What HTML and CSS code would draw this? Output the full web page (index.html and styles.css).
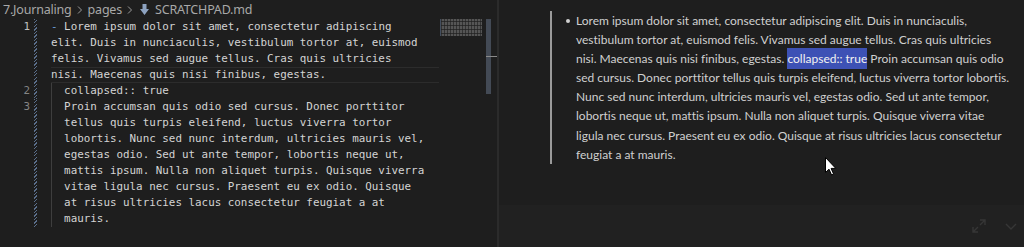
FILE: index.html
```html
<!DOCTYPE html>
<html lang="en">
<head>
<meta charset="utf-8">
<title>SCRATCHPAD.md</title>
<link rel="stylesheet" href="styles.css">
</head>
<body>
<div class="window">
  <section class="pane-left">
    <nav class="breadcrumb">
      <span class="crumb">7.Journaling</span>
      <svg class="chev" width="8" height="10" viewBox="0 0 8 10"><polyline points="2,1.5 5.5,5 2,8.5" fill="none" stroke="#9a9a9a" stroke-width="1"/></svg>
      <span class="crumb">pages</span>
      <svg class="chev" width="8" height="10" viewBox="0 0 8 10"><polyline points="2,1.5 5.5,5 2,8.5" fill="none" stroke="#9a9a9a" stroke-width="1"/></svg>
      <svg class="md-icon" width="9" height="11" viewBox="0 0 9 11"><path d="M2.5 0h4v5h2.5l-4.5 6-4.5-6h2.5z" fill="#8da2c0"/></svg>
      <span class="crumb">SCRATCHPAD.md</span>
    </nav>
    <div class="editor">
      <div class="code">
        <div class="line current">
          <div class="ln">1</div>
          <div class="text">
            <div class="row"><span class="dash">-</span> Lorem ipsum dolor sit amet, consectetur adipiscing</div>
            <div class="row">elit. Duis in nunciaculis, vestibulum tortor at, euismod</div>
            <div class="row">felis. Vivamus sed augue tellus. Cras quis ultricies</div>
            <div class="row row-active">nisi. Maecenas quis nisi finibus, egestas.</div>
          </div>
        </div>
        <div class="line">
          <div class="ln">2</div>
          <div class="text guide">
            <div class="row">  collapsed:: true</div>
          </div>
        </div>
        <div class="line">
          <div class="ln">3</div>
          <div class="text guide">
            <div class="row">  Proin accumsan quis odio sed cursus. Donec porttitor</div>
            <div class="row">  tellus quis turpis eleifend, luctus viverra tortor</div>
            <div class="row">  lobortis. Nunc sed nunc interdum, ultricies mauris vel,</div>
            <div class="row">  egestas odio. Sed ut ante tempor, lobortis neque ut,</div>
            <div class="row">  mattis ipsum. Nulla non aliquet turpis. Quisque viverra</div>
            <div class="row">  vitae ligula nec cursus. Praesent eu ex odio. Quisque</div>
            <div class="row">  at risus ultricies lacus consectetur feugiat a at</div>
            <div class="row">  mauris.</div>
          </div>
        </div>
      </div>
      <div class="minimap"><div class="mini-text"></div></div>
      <div class="scrollbar">
        <div class="slider"></div>
        <div class="marker"></div>
      </div>
    </div>
  </section>
  <div class="divider"></div>
  <section class="pane-right">
    <div class="preview">
      <ul class="bullets">
        <li>
          <span class="pl">Lorem ipsum dolor sit amet, consectetur adipiscing elit. Duis in nunciaculis,</span>
          <span class="pl">vestibulum tortor at, euismod felis. Vivamus sed augue tellus. Cras quis ultricies</span>
          <span class="pl">nisi. Maecenas quis nisi finibus, egestas. <mark class="sel">collapsed:: true</mark> Proin accumsan quis odio</span>
          <span class="pl">sed cursus. Donec porttitor tellus quis turpis eleifend, luctus viverra tortor lobortis.</span>
          <span class="pl">Nunc sed nunc interdum, ultricies mauris vel, egestas odio. Sed ut ante tempor,</span>
          <span class="pl">lobortis neque ut, mattis ipsum. Nulla non aliquet turpis. Quisque viverra vitae</span>
          <span class="pl">ligula nec cursus. Praesent eu ex odio. Quisque at risus ultricies lacus consectetur</span>
          <span class="pl">feugiat a at mauris.</span>
        </li>
      </ul>
    </div>
    <div class="panel">
      <svg class="pico" width="14" height="14" viewBox="0 0 14 14"><path d="M8 1h5v5M13 1L8 6M6 13H1V8M1 13l5-5" fill="none" stroke="#363636" stroke-width="1.4"/></svg>
      <svg class="pico" width="14" height="14" viewBox="0 0 14 14"><polyline points="2,5 7,10 12,5" fill="none" stroke="#363636" stroke-width="1.4"/></svg>
    </div>
  </section>
  <svg class="pointer" width="12" height="19" viewBox="0 0 12 19"><path d="M0.5 0.5 L0.5 15.5 L4 12.2 L6.6 18 L8.6 17.1 L6.1 11.4 L10.8 11.4 Z" fill="#ffffff" stroke="#000000" stroke-width="1"/></svg>
</div>
</body>
</html>
```
FILE: styles.css
```css
html, body {
  margin: 0;
  padding: 0;
  background: #1e1e1e;
}
.window {
  position: relative;
  width: 1024px;
  height: 247px;
  overflow: hidden;
  display: flex;
  background: #1e1e1e;
}
.pane-left {
  width: 497px;
  flex: none;
  display: flex;
  flex-direction: column;
}
.breadcrumb {
  height: 19px;
  display: flex;
  align-items: center;
  padding-left: 3px;
  gap: 3px;
  font-family: "Noto Sans", sans-serif;
  font-size: 12.5px;
  color: #a8a8a8;
  letter-spacing: -0.2px;
}
.chev { margin: 0 1px; }
.md-icon { margin: 0 3px 0 2px; }
.editor {
  display: flex;
  flex: 1;
}
.code {
  width: 439px;
  flex: none;
  font-family: "DejaVu Sans Mono", monospace;
  font-size: 10.88px;
  color: #d4d4d4;
}
.line {
  display: flex;
}
.ln {
  width: 51px;
  flex: none;
  box-sizing: border-box;
  padding-right: 21px;
  text-align: right;
  line-height: 16px;
  color: #858585;
  background-image: repeating-linear-gradient(135deg, #5b6f8c 0 1px, #1e1e1e 1px 2.5px);
  background-size: 3px 100%;
  background-position: 34px 0;
  background-repeat: no-repeat;
}
.current .ln { color: #c0c0c0; }
.text {
  flex: 1;
}
.guide {
  background: linear-gradient(#3e3e3e, #3e3e3e) no-repeat 0 0 / 1px 100%;
}
.row {
  height: 16px;
  line-height: 16px;
  white-space: pre;
}
.row-active {
  box-shadow: inset 0 1px 0 #2c2c2c, inset 0 -1px 0 #2c2c2c;
}
.dash { color: #6a9bd8; }
.minimap {
  width: 47px;
  flex: none;
}
.mini-text {
  margin-left: 1px;
  width: 41px;
  height: 17px;
  border-left: 1px solid #5d6f8a;
  background-image:
    repeating-linear-gradient(90deg, rgba(30,30,30,0.6) 0 1px, transparent 1px 3px),
    repeating-linear-gradient(180deg, #7a7a7a 0 1px, #3a3a3a 1px 1.35px);
  opacity: 0.6;
}
.scrollbar {
  width: 11px;
  flex: none;
  position: relative;
}
.slider {
  width: 5px;
  height: 75px;
  background: #434a55;
}
.marker {
  position: absolute;
  left: 0;
  top: 37px;
  width: 11px;
  height: 1px;
  background: #8a8a8a;
}
.divider {
  width: 2px;
  flex: none;
  background: #2b2b2b;
}
.pane-right {
  flex: 1;
  display: flex;
  flex-direction: column;
}
.preview {
  flex: 1;
  padding: 11px 0 0 51px;
}
.bullets {
  margin: 0;
  padding: 0;
  list-style: none;
  border-left: 2px solid #9b9b9b;
  width: 469px;
}
.bullets li {
  position: relative;
  padding-left: 24px;
  font-family: "Lato", sans-serif;
  font-size: 12px;
  font-variant-ligatures: none;
  line-height: 19.1px;
  color: #d0d0d0;
}
.bullets li::before {
  content: "";
  position: absolute;
  left: 14px;
  top: 8px;
  width: 4px;
  height: 4px;
  border-radius: 50%;
  background: #d0d0d0;
}
.pl {
  display: block;
  white-space: nowrap;
}
.sel {
  background: #3d51b5;
  color: #f2f2f2;
  padding: 3px 0 3px;
}
.panel {
  height: 42px;
  background: #212121;
  display: flex;
  justify-content: flex-end;
  align-items: center;
  gap: 18px;
  padding-right: 6px;
}
.pointer {
  position: absolute;
  left: 825px;
  top: 157px;
}
```
